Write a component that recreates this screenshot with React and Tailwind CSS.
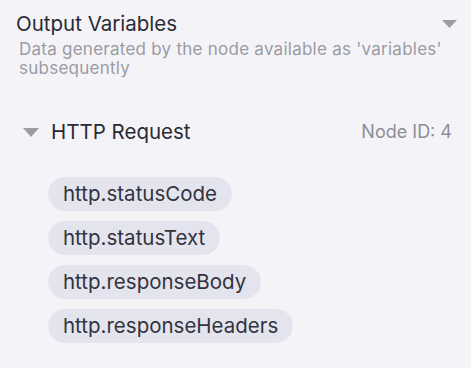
export default function App() {
  const vars = ["http.statusCode", "http.statusText", "http.responseBody", "http.responseHeaders"];
  return (
    <div className="w-[474px] h-[370px] bg-white" style={{ fontFamily: "Inter, 'Liberation Sans', sans-serif" }}>
      <div className="w-[471px] h-[368px] bg-[#f4f4f8] pt-[11px] pl-[16px] pr-[16px]">
        <div className="flex items-start justify-between">
          <div className="text-[20.5px] leading-[26px] text-[#2a2a35]">Output Variables</div>
          <svg width="15" height="8" viewBox="0 0 15 8" className="mt-[9px] -mr-[2px]">
            <polygon points="0,0 15,0 7.5,8" fill="#9c9ca2" />
          </svg>
        </div>
        <div className="text-[17px] leading-[19px] tracking-[0.25px] text-[#9b9ba3] mt-[3px] pl-[3px] pr-[4px]">
          Data generated by the node available as 'variables' subsequently
        </div>
        <div className="flex items-center justify-between mt-[41px] pl-[7px] pr-[3px]">
          <div className="flex items-center gap-[12px]">
            <svg width="16" height="9" viewBox="0 0 16 9">
              <polygon points="0,0 16,0 8,9" fill="#9c9ca2" />
            </svg>
            <span className="text-[20.5px] leading-[26px] text-[#2a2a35]">HTTP Request</span>
          </div>
          <span className="text-[18px] leading-[22px] text-[#8e8e95]">Node ID: 4</span>
        </div>
        <div className="flex flex-col items-start gap-[10px] mt-[32px] pl-[32px]">
          {vars.map((v) => (
            <div key={v} className="h-[34px] px-[15px] rounded-full bg-[#e4e4ee] text-[20.5px] leading-[34px] text-[#33333d]">
              {v}
            </div>
          ))}
        </div>
      </div>
    </div>
  );
}
